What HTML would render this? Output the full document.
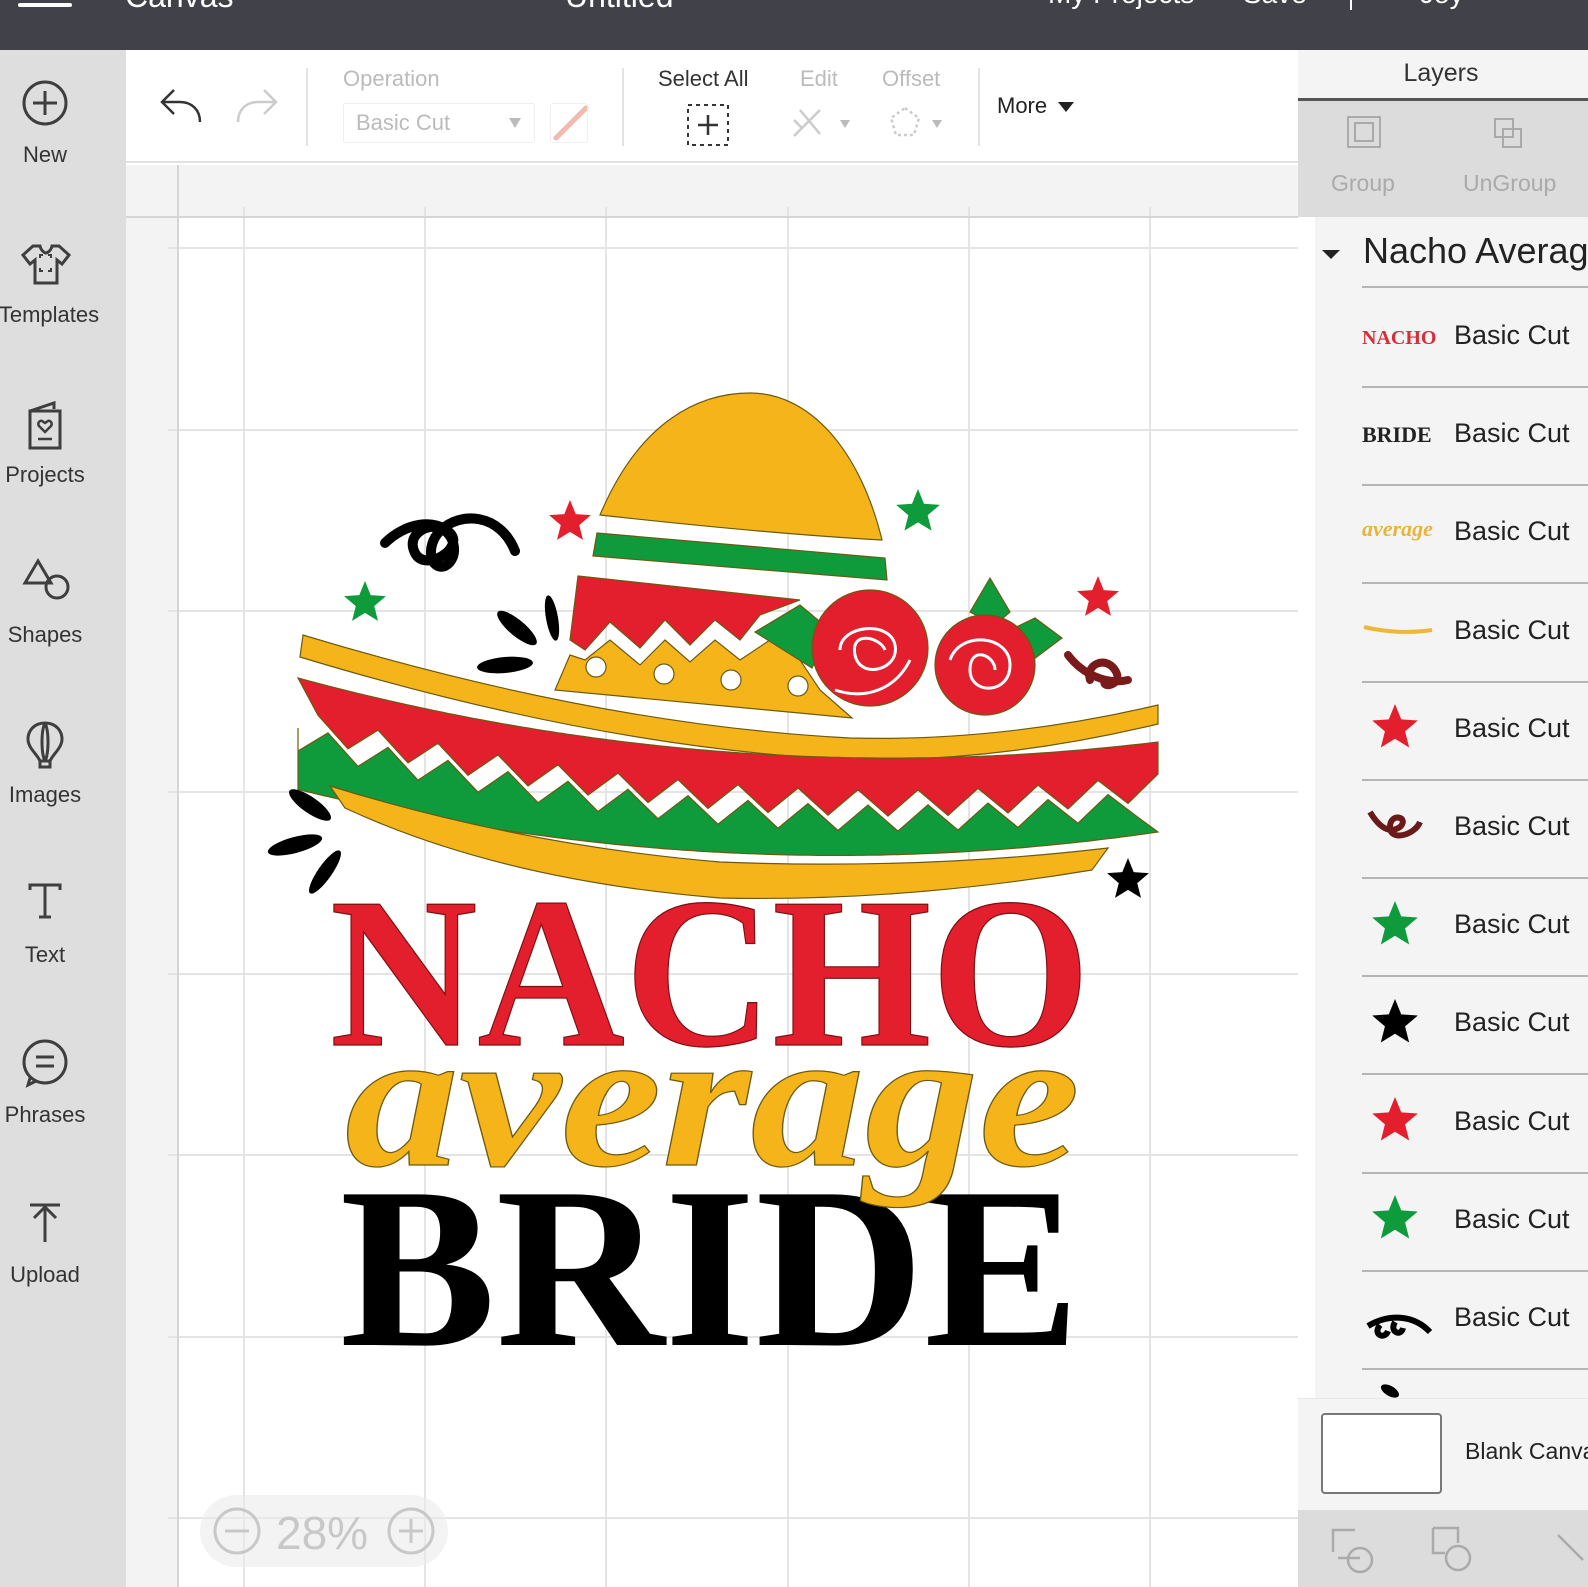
<!DOCTYPE html>
<html><head><meta charset="utf-8"><style>
*{margin:0;padding:0;box-sizing:border-box}
html,body{width:1588px;height:1587px;overflow:hidden}
body{position:relative;background:#fff;font-family:"Liberation Sans",sans-serif}
.abs{position:absolute}
.top{left:0;top:0;width:1588px;height:50px;background:#414249;overflow:hidden}
.top span{position:absolute;color:#fff;font-size:32px;top:-22px}
.side{left:0;top:50px;width:126px;height:1537px;background:#dedede;overflow:hidden}
.si{position:absolute;left:0;width:90px;text-align:center;font-size:22px;color:#333}
.tb{left:126px;top:50px;width:1172px;height:113px;background:#fff;border-bottom:2px solid #e2e2e2}
.lbl{position:absolute;font-size:22px;color:#bbb}
.sep{position:absolute;top:68px;width:2px;height:78px;background:#e3e3e3}
.panel{left:1298px;top:50px;width:290px;height:1537px;background:#f4f4f4;overflow:hidden}
#rows{position:absolute;left:0;top:0;width:1588px;height:1587px;overflow:hidden;pointer-events:none}
.row{position:absolute;left:1362px;width:226px;height:98px;border-bottom:2px solid #b5b5b5;overflow:hidden}
.row .t{position:absolute;left:92px;top:30px;font-size:27px;color:#222;white-space:nowrap}
</style></head><body>
<div class="abs top">
 <div class="abs" style="left:18px;top:3px;width:54px;height:4px;background:#fff;border-radius:2px"></div>
 <span style="left:125px">Canvas</span><span style="left:565px">Untitled</span>
 <span style="left:1048px;font-size:28px">My Projects</span><span style="left:1243px;font-size:28px">Save</span>
 <span style="left:1350px;top:-10px;width:2px;height:20px;background:#fff"></span>
 <span style="left:1420px;font-size:28px">Joy</span>
</div>
<div class="abs side">
 <svg class="abs" style="left:0;top:0" width="126" height="1300" fill="none" stroke="#3e3e3e" stroke-width="3">
  <circle cx="45" cy="53" r="21"/><path d="M45 41v24M33 53h24"/>
  <path d="M33 196l-10 9 7 9 5-4v23h22v-23l5 4 7-9-10-9h-7c-1 5-5 7-6 7s-5-2-6-7z"/>
  <path d="M40 208v-3h3M48 205h3v3M40 218v3h3M51 218v3h-3" stroke-width="2"/>
  <path d="M30 361l24-8v6M30 361h30v37H30z"/><path d="M38 389h14M45 382l-6-6c-2-3 1-6 3-5l3 2 3-2c2-1 5 2 3 5z" stroke-width="2.5"/>
  <path d="M38 511l-13 22h26z"/><circle cx="57" cy="537" r="11"/>
  <path d="M45 673c-12 0-17 9-17 16 0 9 9 15 12 22h10c3-7 12-13 12-22 0-7-5-16-17-16zM40 711h10v6H40zM45 673c-4 8-4 30 0 38M45 673c4 8 4 30 0 38"/>
  <path d="M30 840v-5h30v5M45 835v32M39 867h12"/>
  <circle cx="45" cy="1012" r="21"/><path d="M36 1007h18M36 1016h18M30 1028l-2 7 8-4"/>
  <path d="M30 1155h30M45 1192v-35M34 1168l11-11 11 11"/>
 </svg>
 <div class="si" style="top:92px">New</div>
 <div class="si" style="top:252px;left:-6px;width:110px">Templates</div>
 <div class="si" style="top:412px">Projects</div>
 <div class="si" style="top:572px">Shapes</div>
 <div class="si" style="top:732px">Images</div>
 <div class="si" style="top:892px">Text</div>
 <div class="si" style="top:1052px">Phrases</div>
 <div class="si" style="top:1212px">Upload</div>
</div>
<div class="abs tb">
 <svg class="abs" style="left:0;top:0" width="1172" height="113" fill="none" stroke-width="2.5">
  <path d="M48 40l-12 12 12 12M36 52h18c12 0 20 8 20 20" stroke="#333"/>
  <path d="M138 40l12 12-12 12M150 52h-18c-12 0-20 8-20 20" stroke="#ccc"/>
  <path d="M430 88l30-30" stroke="#f2b9b0" stroke-width="5" stroke-linecap="round"/>
  <rect x="562" y="55" width="40" height="40" stroke="#333" stroke-dasharray="4 4" stroke-width="2"/>
  <path d="M582 65v20M572 75h20" stroke="#333"/>
  <path d="M668 86l26-26M674 60l20 24M668 70l8 8" stroke="#ccc"/>
  <path d="M779 58l14 10-5 17h-18l-5-17z" stroke="#ccc" stroke-dasharray="3 3"/>
  <path d="M714 70h10l-5 8zM806 70h10l-5 8zM383 68h12l-6 10z" fill="#bbb" stroke="none"/>
  <path d="M932 52h16l-8 10z" fill="#222" stroke="none"/>
 </svg>
 <div class="sep" style="left:180px;top:18px"></div>
 <div class="sep" style="left:496px;top:18px"></div>
 <div class="sep" style="left:852px;top:18px"></div>
 <div class="lbl" style="left:217px;top:16px">Operation</div>
 <div class="abs" style="left:217px;top:53px;width:192px;height:40px;border:1px solid #eee;border-radius:3px"></div>
 <div class="lbl" style="left:230px;top:60px;color:#bbb">Basic Cut</div>
 <div class="abs" style="left:424px;top:53px;width:38px;height:40px;border:1px solid #eee;border-radius:3px"></div>
 <div class="lbl" style="left:532px;top:16px;color:#333">Select All</div>
 <div class="lbl" style="left:674px;top:16px">Edit</div>
 <div class="lbl" style="left:756px;top:16px">Offset</div>
 <div class="lbl" style="left:871px;top:43px;color:#222">More</div>
</div>
<svg class="abs" style="left:126px;top:165px" width="1189" height="1422">
 <rect width="1189" height="52" fill="#f3f3f3"/><rect width="52" height="1422" fill="#f3f3f3"/>
 <rect x="52" y="52" width="1137" height="1370" fill="#fff"/>
 <g stroke="#e4e4e4" stroke-width="2">
  <path d="M118 42V1422M299 42V1422M480 42V1422M662 42V1422M843 42V1422M1024 42V1422"/>
  <path d="M42 83H1189M42 265H1189M42 446H1189M42 627H1189M42 809H1189M42 990H1189M42 1172H1189M42 1353H1189"/>
  <path d="M0 52H1189M52 0V1422" stroke="#d5d5d5"/>
 </g>
</svg>
<svg id="art" class="abs" style="left:0;top:0" width="1300" height="1587" stroke="#6b5a10" stroke-width="1.2">
 <defs><path id="st" d="M0 -1 .26 -.36 .95 -.31 .42 .14 .59 .81 0 .45 -.59 .81 -.42 .14 -.95 -.31 -.26 -.36z"/></defs>
 <path d="M600 515C640 420 700 393 750 393C810 393 860 450 882 540C790 535 690 525 600 515Z" fill="#f5b51a"/>
 <path d="M597 533L885 558L887 580L593 556Z" fill="#0f9a3c"/>
 <path d="M578 576L800 600L760 615L740 640L715 620L690 645L665 620L640 648L610 622L585 650L570 640Z" fill="#e31e2d"/>
 <path d="M570 655L585 660L610 640L640 665L665 640L690 662L715 640L740 660L770 640L800 660L820 690L852 718L555 690Z" fill="#f5b51a"/>
 <g fill="#fff"><circle cx="596" cy="667" r="10"/><circle cx="664" cy="674" r="10"/><circle cx="731" cy="680" r="10"/><circle cx="798" cy="686" r="10"/></g>
 <path d="M303 635Q600 725 850 738Q1000 742 1158 705L1158 724Q1000 762 850 760Q600 748 300 657Z" fill="#f5b51a"/>
 <path id="red" fill="#e31e2d"/><path id="grn" fill="#0f9a3c"/>
 <path d="M330 786Q520 845 720 862Q920 870 1108 848L1092 870Q900 902 720 898Q500 880 345 808Z" fill="#f5b51a"/>
 <path d="M755 632L800 605L830 630L812 668Z" fill="#0f9a3c"/>
 <path d="M970 612L990 578L1010 612L995 625Z" fill="#0f9a3c"/>
 <path d="M1010 630L1035 618L1062 638L1030 662Z" fill="#0f9a3c"/>
 <circle cx="870" cy="648" r="58" fill="#e31e2d"/><circle cx="985" cy="665" r="50" fill="#e31e2d"/>
 <g fill="none" stroke="#fff" stroke-width="3"><path d="M840 650c0-25 50-30 55-5s-35 35-40 10 25-18 30-5M835 690c30 10 60 0 75-30M950 660c10-30 60-25 60 5s-40 30-40 5 25-15 25 0"/></g>
 <path d="M1068 655c15 20 40 30 60 25M1090 680c-5-15 15-25 25-10s-15 20 -10 10" fill="none" stroke="#7a1a1a" stroke-width="8" stroke-linecap="round"/>
 <path d="M385 543c20-20 50-25 65-10s-25 40-35 20 15-30 25-25c15 5 20 30 5 38-15 5-20-20-5-35 20-20 60-18 75 20" fill="none" stroke="#000" stroke-width="10" stroke-linecap="round"/>
 <g fill="#000" stroke="none">
  <ellipse cx="517" cy="628" rx="25" ry="8" transform="rotate(40 517 628)"/>
  <ellipse cx="552" cy="618" rx="23" ry="6" transform="rotate(80 552 618)"/>
  <ellipse cx="505" cy="665" rx="28" ry="8" transform="rotate(-5 505 665)"/>
  <ellipse cx="310" cy="805" rx="25" ry="8" transform="rotate(35 310 805)"/>
  <ellipse cx="295" cy="845" rx="28" ry="8" transform="rotate(-15 295 845)"/>
  <ellipse cx="325" cy="872" rx="26" ry="7" transform="rotate(-55 325 872)"/>
 </g>
 <g stroke="none">
 <use href="#st" transform="translate(570 522) scale(22)" fill="#e31e2d"/>
 <use href="#st" transform="translate(918 512) scale(23)" fill="#0f9a3c"/>
 <use href="#st" transform="translate(365 603) scale(22)" fill="#0f9a3c"/>
 <use href="#st" transform="translate(1098 598) scale(22)" fill="#e31e2d"/>
 <use href="#st" transform="translate(1128 880) scale(22)" fill="#000"/>
 </g>
 <text x="330" y="1045" font-family="Liberation Serif,serif" font-weight="bold" font-size="215" fill="#e31e2d" textLength="760" lengthAdjust="spacingAndGlyphs" stroke="#7a1010">NACHO</text>
 <text x="340" y="1345" font-family="Liberation Serif,serif" font-weight="bold" font-size="230" fill="#000" textLength="740" lengthAdjust="spacingAndGlyphs" stroke="none">BRIDE</text>
 <text x="345" y="1165" font-family="Liberation Serif,serif" font-style="italic" font-weight="bold" font-size="200" fill="#f5b51a" textLength="735" lengthAdjust="spacingAndGlyphs">average</text>
</svg>
<div class="abs" style="left:200px;top:1495px;width:248px;height:72px;border-radius:36px;background:rgba(235,235,235,.6)"></div>
<svg class="abs" style="left:200px;top:1495px" width="248" height="72" fill="none" stroke="#c8c8c8" stroke-width="3"><circle cx="37" cy="36" r="22"/><path d="M25 36h24"/><circle cx="211" cy="36" r="22"/><path d="M199 36h24M211 24v24"/></svg>
<div class="abs" style="left:276px;top:1506px;font-size:46px;color:#c8c8c8">28%</div>
<div class="abs panel">
 <div class="abs" style="left:0;top:0;width:290px;height:50px;font-size:25px;color:#333;text-align:center;padding-top:9px;padding-right:4px">Layers</div>
 <div class="abs" style="left:0;top:48px;width:290px;height:3px;background:#555"></div>
 <div class="abs" style="left:0;top:51px;width:290px;height:116px;background:#dcdcdc"></div>
 <svg class="abs" style="left:0;top:51px" width="290" height="80" fill="none" stroke="#aaa" stroke-width="2"><rect x="50" y="16" width="32" height="30"/><rect x="57" y="22" width="18" height="18"/><rect x="197" y="18" width="18" height="18"/><rect x="205" y="28" width="18" height="18"/></svg>
 <div class="abs" style="left:33px;top:120px;font-size:23px;color:#aaa">Group</div>
 <div class="abs" style="left:165px;top:120px;font-size:23px;color:#aaa">UnGroup</div>
 <div class="abs" style="left:0;top:167px;width:17px;height:1183px;background:#fff"></div>
 <div class="abs" style="left:24px;top:200px;width:0;height:0;border-left:9px solid transparent;border-right:9px solid transparent;border-top:9px solid #222"></div>
 <div class="abs" style="left:65px;top:180px;font-size:36px;color:#222;white-space:nowrap">Nacho Average Bride</div>
 <div class="abs" style="left:0;top:1348px;width:290px;height:112px;background:#f4f4f4;border-top:1px solid #e8e8e8"></div>
 <div class="abs" style="left:23px;top:1363px;width:121px;height:81px;background:#fff;border:2px solid #777;border-radius:4px"></div>
 <div class="abs" style="left:167px;top:1388px;font-size:23px;color:#222;white-space:nowrap">Blank Canvas</div>
 <div class="abs" style="left:0;top:1460px;width:290px;height:77px;background:#dcdcdc"></div>
 <svg class="abs" style="left:0;top:1460px" width="290" height="77" fill="none" stroke="#aaa" stroke-width="2.5"><path d="M35 42V20h22M40 48h22"/><circle cx="62" cy="50" r="12"/><path d="M135 18h25v15M135 18v25h12"/><circle cx="160" cy="48" r="12"/><path d="M260 25l25 25"/></svg>
</div>
<div id="rows"></div>
<svg class="abs" style="left:1360px;top:290px" width="80" height="1108">
 <text x="2" y="54" font-family="Liberation Serif,serif" font-weight="bold" font-size="20" fill="#d32f3a">NACHO</text>
 <text x="2" y="152" font-family="Liberation Serif,serif" font-weight="bold" font-size="22" fill="#222">BRIDE</text>
 <text x="2" y="246" font-family="Liberation Serif,serif" font-style="italic" font-weight="bold" font-size="22" fill="#e8b53c">average</text>
 <path d="M4 337q34 8 68 3" stroke="#f0b63a" stroke-width="4" fill="none"/>
 <use href="#st" transform="translate(35 438) scale(24)" fill="#e31e2d"/>
 <path d="M10 522q15 25 30 15c10-10-10-15-10 0s25 8 30-5" stroke="#6b1a1a" stroke-width="6" fill="none"/>
 <use href="#st" transform="translate(35 635) scale(24)" fill="#0f9a3c"/>
 <use href="#st" transform="translate(35 733) scale(24)" fill="#000"/>
 <use href="#st" transform="translate(35 831) scale(24)" fill="#e31e2d"/>
 <use href="#st" transform="translate(35 929) scale(24)" fill="#0f9a3c"/>
 <path d="M8 1036c20-12 45-12 62 6M20 1035c-8 10 5 15 8 6M35 1032c-6 10 6 15 8 6" stroke="#000" stroke-width="6" fill="none"/>
 <ellipse cx="30" cy="1101" rx="10" ry="5" transform="rotate(30 30 1101)"/>
</svg>
<script>
var rows=document.getElementById('rows'),h='<div class="row" style="top:190px"></div>';
for(var i=0;i<11;i++){var t=290+i*98.2;h+='<div class="row" style="top:'+t+'px"><div class="t">Basic Cut</div></div>';}
rows.innerHTML=h;
function T(x){var x0=298,y0=678,x1=728,y1=752,x2=1158,y2=742;
return y0*(x-x1)*(x-x2)/((x0-x1)*(x0-x2))+y1*(x-x0)*(x-x2)/((x1-x0)*(x1-x2))+y2*(x-x0)*(x-x1)/((x2-x0)*(x2-x1));}
var r='M298 '+T(298),g='',p=60,x;
for(x=298;x<=1158;x+=5)r+=' L'+x+' '+T(x).toFixed(1);
var zb=[];
for(x=1158;x>=298;x-=p/2){var k=Math.round((1158-x)/(p/2))%2;zb.push([x,T(x)+(k?58:32)]);}
r+=' '+zb.map(function(a){return 'L'+a[0]+' '+a[1].toFixed(1)}).join(' ')+'Z';
document.getElementById('red').setAttribute('d',r);
g='M298 '+(T(298)+50);
for(x=298;x<=1158;x+=p/2){var k=Math.round((1158-x)/(p/2))%2;g+=' L'+x+' '+(T(x)+(k?73:47)).toFixed(1);}
for(x=1158;x>=298;x-=5)g+=' L'+x+' '+(T(x)+90+(1158-x)*0.025).toFixed(1);
document.getElementById('grn').setAttribute('d',g+'Z');
</script>
</body></html>
